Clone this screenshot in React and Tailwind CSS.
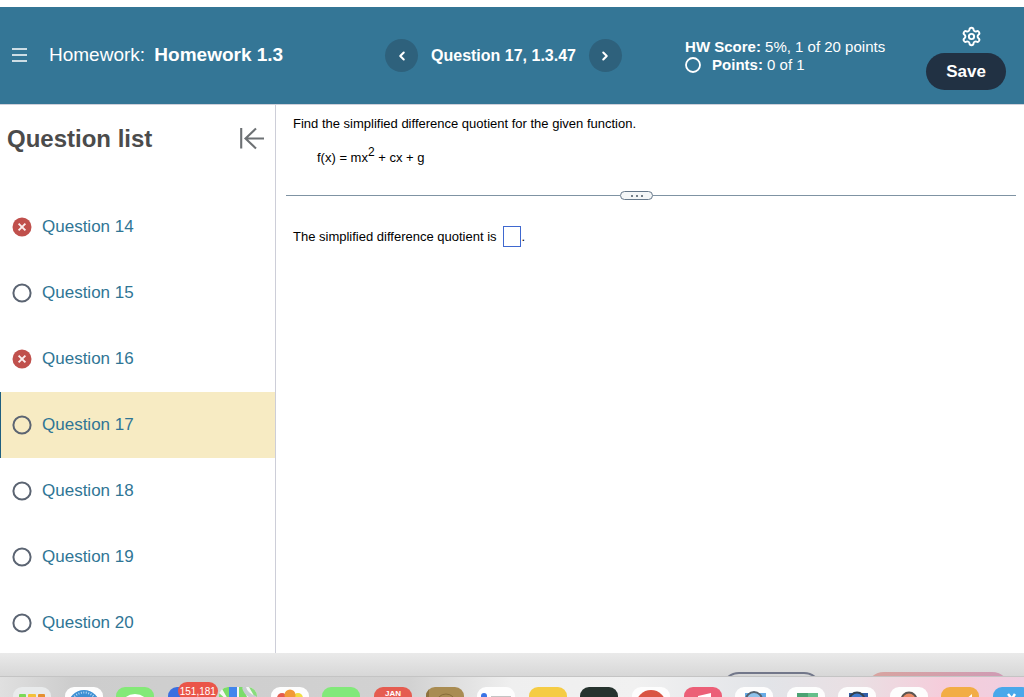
import { ChevronLeft, ChevronRight, Settings } from 'lucide-react'

const questions = [
    { number: 14, status: 'incorrect' },
    { number: 15, status: 'unanswered' },
    { number: 16, status: 'incorrect' },
    { number: 17, status: 'unanswered' },
    { number: 18, status: 'unanswered' },
    { number: 19, status: 'unanswered' },
    { number: 20, status: 'unanswered' },
]

const currentQuestion = 17

const StatusIcon = ({ status }) => {
    if (status === 'incorrect') {
        return (
            <svg viewBox="0 0 20 20" className="size-5 shrink-0" role="img" aria-label="Incorrect">
                <circle cx="10" cy="10" r="9.5" fill="#c0504c" />
                <path d="M6.6 6.6l6.8 6.8M13.4 6.6l-6.8 6.8" stroke="#fbeeee" strokeWidth="1.9" />
            </svg>
        )
    }
    return (
        <svg viewBox="0 0 20 20" className="size-5 shrink-0" role="img" aria-label="Unanswered">
            <circle cx="10" cy="10" r="8.6" fill="none" stroke="#5b6472" strokeWidth="2" />
        </svg>
    )
}

const Header = () => (
    <header className="flex h-[98px] shrink-0 items-center border-b border-[#cfd0da] bg-[#347696] text-white">
        <div className="flex w-[37.6%] items-center pl-[11px]">
            <button type="button" aria-label="Menu" className="mr-[21px] shrink-0">
                <svg viewBox="0 0 17 16" className="h-4 w-[17px]" stroke="#fff" strokeWidth="1.7">
                    <path d="M1 1h15M1 7h15M1 13h15" />
                </svg>
            </button>
            <h1 className="whitespace-nowrap text-[19px]">
                Homework: <span className="ml-1 font-bold">Homework 1.3</span>
            </h1>
        </div>

        <nav className="flex w-[29.3%] items-center gap-[13px]" aria-label="Question navigation">
            <button type="button" aria-label="Previous question" className="flex size-[33px] items-center justify-center rounded-full bg-[#2e617c]">
                <ChevronLeft size={14} strokeWidth={3.5} />
            </button>
            <span className="whitespace-nowrap text-[16px] font-bold">Question 17, 1.3.47</span>
            <button type="button" aria-label="Next question" className="flex size-[33px] items-center justify-center rounded-full bg-[#2e617c]">
                <ChevronRight size={14} strokeWidth={3.5} />
            </button>
        </nav>

        <div className="flex-1 whitespace-nowrap text-[15px] leading-[18px]">
            <p><b>HW Score:</b> 5%, 1 of 20 points</p>
            <p className="flex items-center">
                <svg viewBox="0 0 16 16" className="mr-[11px] size-4" fill="none" stroke="#fff" strokeWidth="1.8">
                    <circle cx="8" cy="8" r="7" />
                </svg>
                <span><b>Points:</b> 0 of 1</span>
            </p>
        </div>

        <div className="mr-[18px] flex flex-col items-end gap-[6px] pt-[5px]">
            <button type="button" aria-label="Settings" className="mr-6">
                <Settings size={21} strokeWidth={2.2} />
            </button>
            <button type="button" className="h-[37px] w-20 rounded-full bg-[#213143] text-[17px] font-bold">
                Save
            </button>
        </div>
    </header>
)

const QuestionList = () => (
    <aside className="w-[276px] shrink-0 overflow-hidden border-r border-[#cdced8]">
        <div className="flex h-[89px] items-start justify-between pl-[7px] pr-[10px] pt-[18px]">
            <h2 className="text-[24px] font-bold leading-8 text-[#4b4b4b]">Question list</h2>
            <button type="button" aria-label="Collapse question list" className="pt-1">
                <svg viewBox="0 0 26 24" className="h-6 w-[26px]" fill="none" stroke="#6d7174" strokeWidth="2.100">
                    <path d="M2.2 1v20.500M25 11.500H6.500M17 1.500L6.500 11.500L17 21.500" />
                </svg>
            </button>
        </div>
        <ul>
            {questions.map(({ number, status }) => (
                <li key={number}>
                    <a
                        href={`#question-${number}`}
                        aria-current={number === currentQuestion ? 'true' : undefined}
                        className={`flex h-[66px] items-center gap-[10px] border-l pl-[11px] text-[17px] text-[#2f7595] ${number === currentQuestion ? 'border-[#1f5f80] bg-[#f7ebc3]' : 'border-transparent'}`}
                    >
                        <StatusIcon status={status} />
                        Question {number}
                    </a>
                </li>
            ))}
        </ul>
    </aside>
)

const Exercise = () => (
    <main className="min-w-0 flex-1 pl-[10px] pr-2 pt-[9px] text-[13px] leading-5 text-black">
        <p className="pl-[7px]">Find the simplified difference quotient for the given function.</p>
        <p className="mt-[14px] pl-[31px]">
            f(x) = mx<sup className="text-[12px]">2</sup> + cx + g
        </p>
        <div className="mt-[23px] flex items-center">
            <div className="h-px flex-1 bg-[#7f93a3]" />
            <button type="button" aria-label="Resize panes" className="flex h-[9px] w-[33px] items-center justify-center gap-[3px] rounded-full border border-[#66788a] bg-[#f4f6f7]">
                <span className="size-[2px] rounded-full bg-[#4a5763]" />
                <span className="size-[2px] rounded-full bg-[#4a5763]" />
                <span className="size-[2px] rounded-full bg-[#4a5763]" />
            </button>
            <div className="h-px w-[363px] bg-[#7f93a3]" />
        </div>
        <div className="mt-[26px] flex items-center pl-[7px]">
            <label htmlFor="answer">The simplified difference quotient is</label>
            <input id="answer" type="text" className="ml-[6px] mr-px h-[21px] w-[18px] border border-[#3f68cf] outline-none" />
            <span>.</span>
        </div>
    </main>
)

const AppIcon = ({ fill = '#fdfdfd', children }) => (
    <svg viewBox="0 0 38 38" className="size-[38px] shrink-0 rounded-[9px]" aria-hidden="true">
        <rect width="38" height="38" fill={fill} />
        {children}
    </svg>
)

const Dock = () => (
    <footer className="h-[21px] shrink-0 overflow-hidden border-t border-[#c4c4c4] bg-[linear-gradient(90deg,#e0e0e0_0%,#cdcdcd_7%,#cfcfcf_25%,#d2d2d2_40%,#efefef_50%,#f1f1f1_62%,#e2e4e8_75%,#eadfe3_84%,#f5cddb_92%,#efcfe0_100%)] pt-[10px]">
        <div className="-mr-[7px] flex justify-between pl-[13px]">
            <AppIcon fill="#e9ebec">
                <rect x="6" y="7" width="7" height="8" rx="1" fill="#7bd957" />
                <rect x="15" y="7" width="8" height="8" rx="1" fill="#f2c13a" />
                <rect x="25" y="7" width="7" height="8" rx="1" fill="#e5902f" />
            </AppIcon>
            <AppIcon>
                <circle cx="19" cy="19" r="16" fill="#3d8fd3" />
                <circle cx="19" cy="19" r="13.500" fill="none" stroke="#b7daf3" strokeWidth="2" strokeDasharray="1 1.500" />
            </AppIcon>
            <AppIcon fill="#84e978">
                <ellipse cx="19" cy="17" rx="13" ry="10" fill="#fff" />
            </AppIcon>
            <div className="relative">
                <AppIcon fill="#3a6fe0" />
                <span className="absolute -top-[5px] left-[10px] flex h-[18px] items-center rounded-full bg-[#ea5549] px-[2px] text-[10px] text-white">
                    151,181
                </span>
            </div>
            <AppIcon fill="#f5f6f5">
                <path d="M0 6L9 14H0zM2 0h8v14zM20 0h4l4 10H20z" fill="#7ddc69" />
                <rect x="10" width="8" height="14" fill="#4285ec" />
                <path d="M30 0h8v14z" fill="#8adc7c" />
                <path d="M25 0c1 5 5 9 12 11" fill="none" stroke="#c9cdd2" strokeWidth="4" />
            </AppIcon>
            <AppIcon>
                <circle cx="11" cy="11" r="5" fill="#e45c4e" />
                <circle cx="27" cy="11" r="5" fill="#f2dd43" />
                <circle cx="19" cy="8" r="5.500" fill="#f19a37" />
            </AppIcon>
            <AppIcon fill="#82e97a" />
            <AppIcon fill="#e55c50">
                <text x="19" y="9" textAnchor="middle" fontSize="8" fontWeight="bold" fill="#fff">JAN</text>
            </AppIcon>
            <AppIcon fill="#a98c52">
                <rect width="3" height="38" fill="#8d713d" />
                <circle cx="20" cy="17" r="10" fill="none" stroke="#876c3a" strokeWidth="1" />
            </AppIcon>
            <AppIcon>
                <circle cx="7" cy="9" r="3" fill="#3974e6" />
                <path d="M14 9.500h20" stroke="#c4c4c4" strokeWidth="1" />
            </AppIcon>
            <AppIcon fill="#f5cc44" />
            <AppIcon fill="#26332e" />
            <AppIcon>
                <circle cx="19" cy="18" r="15" fill="#d95443" />
            </AppIcon>
            <AppIcon fill="#ec5f77">
                <path d="M14 9L27 6v6H14z" fill="#fff" />
            </AppIcon>
            <AppIcon>
                <rect x="10" y="6" width="21" height="12" fill="#67abe6" />
                <circle cx="19" cy="13" r="8" fill="#8ec2ea" stroke="#55626f" strokeWidth="2" />
            </AppIcon>
            <AppIcon>
                <rect x="10" y="6" width="21" height="14" fill="#65bf8b" />
                <rect x="10" y="6" width="11" height="14" fill="#4ba273" />
            </AppIcon>
            <AppIcon>
                <rect x="11" y="6" width="19" height="12" fill="#315da8" />
                <circle cx="19" cy="13" r="7.500" fill="#3f79cc" stroke="#334252" strokeWidth="2" />
            </AppIcon>
            <AppIcon>
                <circle cx="19" cy="13" r="7.500" fill="#e98962" stroke="#5c5552" strokeWidth="2" />
            </AppIcon>
            <AppIcon fill="#f2ad45">
                <path d="M24 13l7-6v3l-5 5z" fill="#fff" />
            </AppIcon>
            <AppIcon fill="#49a8ea">
                <path d="M15 7l4 5M22 7l-4 6" stroke="#fff" strokeWidth="2.500" />
            </AppIcon>
        </div>
    </footer>
)

export default function App() {
    return (
        <div className="flex h-screen flex-col overflow-hidden bg-white pt-[7px] font-['Liberation_Sans',Arial,sans-serif]">
            <Header />
            <div className="flex min-h-0 flex-1">
                <QuestionList />
                <Exercise />
            </div>
            <div className="flex h-[23px] shrink-0 justify-end gap-[44px] overflow-hidden bg-linear-to-b from-[#eaeaea] to-[#d7d7d7] pr-[14px] pt-[19px]">
                <div className="h-9 w-[101px] shrink-0 rounded-full border-2 border-[#72778a]" />
                <div className="h-9 w-[144px] shrink-0 rounded-full bg-linear-to-r from-[#d8a49f] to-[#cf9bb5]" />
            </div>
            <Dock />
        </div>
    )
}
